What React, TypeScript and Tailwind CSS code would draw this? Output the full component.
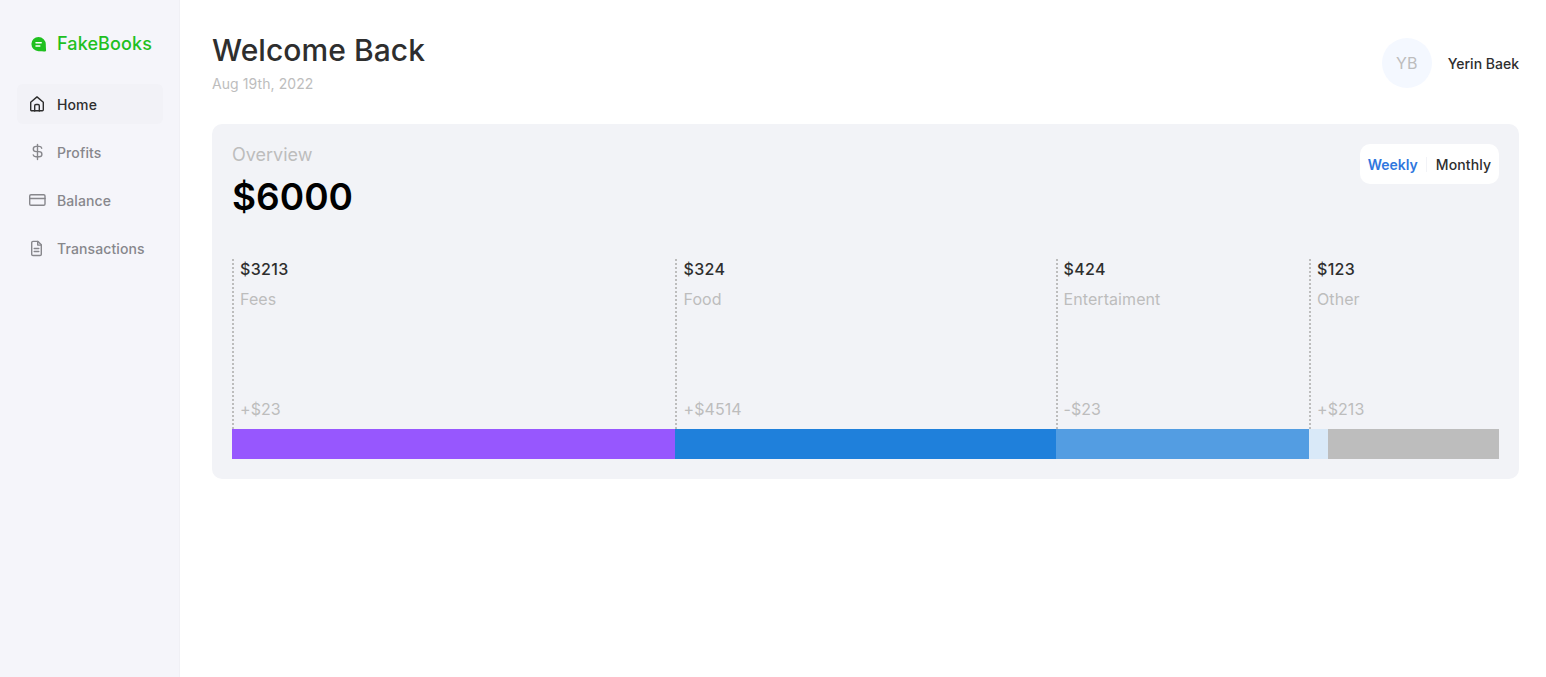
import type { ReactNode } from "react";

function Glyph({ children }: { children: ReactNode }) {
  return (
    <svg width="20" height="20" viewBox="0 0 20 20" fill="none" stroke="currentColor" strokeWidth="1.400" strokeLinecap="round" strokeLinejoin="round" className="shrink-0">
      {children}
    </svg>
  );
}

const nav = [
  {
    label: "Home",
    active: true,
    icon: (
      <Glyph>
        <path d="M2.700 8.300 9 2.900l6.300 5.400v7.400a1 1 0 0 1-1 1H3.700a1 1 0 0 1-1-1z" />
        <path d="M6.700 17v-5.300a1.200 1.200 0 0 1 1.200-1.200h2.200a1.200 1.200 0 0 1 1.200 1.200V17" />
      </Glyph>
    ),
  },
  {
    label: "Profits",
    active: false,
    icon: (
      <Glyph>
        <path d="M9.500 2.500v15" />
        <path d="M13.700 6.200c-.3-1.200-1.400-1.800-2.700-1.800H8.300c-1.700 0-3 1-3 2.600s1.300 2.600 3 2.600h2.600c1.700 0 3 1 3 2.600s-1.300 2.600-3 2.600H8c-1.400 0-2.500-.7-2.800-1.900" />
      </Glyph>
    ),
  },
  {
    label: "Balance",
    active: false,
    icon: (
      <Glyph>
        <rect x="1.700" y="4.700" width="15.300" height="10.600" rx="1.300" />
        <path d="M1.700 8.500H17" />
      </Glyph>
    ),
  },
  {
    label: "Transactions",
    active: false,
    icon: (
      <Glyph>
        <path d="M3.700 4.700a1.300 1.300 0 0 1 1.300-1.300h5l3.300 3.400v9.400a1.300 1.300 0 0 1-1.300 1.300H5a1.300 1.300 0 0 1-1.300-1.300z" />
        <path d="M9.700 3.500v3.600h3.500M6.200 10.500h4.600M6.200 13.500h4.600" />
      </Glyph>
    ),
  },
];

const stats = [
  { value: "$3213", label: "Fees", delta: "+$23", width: "w-[443px]", color: "bg-[#9757fe]", pad: "pl-[6px]" },
  { value: "$324", label: "Food", delta: "+$4514", width: "w-[381px]", color: "bg-[#1f80db]", pad: "pl-[6.500px]" },
  { value: "$424", label: "Entertaiment", delta: "-$23", width: "w-[253px]", color: "bg-[#539de2]", pad: "pl-[5.500px]" },
];

export default function App() {
  return (
    <div className="flex h-[677px] bg-white font-['Inter',sans-serif] text-[#2e2e2e]">
      <aside className="w-[180px] shrink-0 border-r border-[#f0f0f5] bg-[#f5f5fa] px-[17px] pt-[32px]">
        <div className="flex h-[24px] items-center gap-[10px] pl-[13px]">
          <svg width="17" height="17" viewBox="0 0 17 17" className="shrink-0 mt-[1px]">
            <path d="M8.500 1a7.300 7.300 0 0 1 7.300 7.300c0 2.300.2 4.800.3 6.300 0 .5-.4.800-.8.800-2 0-4.600-.2-6.800-.2a7.100 7.100 0 0 1 0-14.200z" fill="#1fc01f" />
            <path d="M6 6.700h5.200M6 10h3.800" stroke="#fff" strokeWidth="1.500" strokeLinecap="round" />
          </svg>
          <span className="text-[18px] font-medium leading-[24px] tracking-[0.006em] text-[#1fc01f]">FakeBooks</span>
        </div>
        <nav className="mt-[28px] flex flex-col gap-[8px]">
          {nav.map(({ label, icon, active }) => (
            <div
              key={label}
              className={`flex h-[40px] w-[146px] items-center gap-[9px] rounded-[6px] pl-[11px] text-[14px] font-medium tracking-[0.008em] ${
                active ? "bg-[#f2f2f7] text-[#2e2e2e]" : "text-[#87878c]"
              }`}
            >
              {icon}
              <span>{label}</span>
            </div>
          ))}
        </nav>
      </aside>

      <main className="min-w-0 flex-1 pl-[32px] pr-[27px]">
        <header className="flex h-[124px] items-start justify-between">
          <div className="pt-[31px]">
            <h1 className="text-[30px] font-medium leading-[38px] tracking-[0.002em] text-[#2e2e2e]">Welcome Back</h1>
            <p className="mt-[5px] text-[14px] leading-[20px] tracking-[0.006em] text-[#bdbdbd]">Aug 19th, 2022</p>
          </div>
          <div className="mt-[38px] flex items-center gap-[16px]">
            <div className="flex h-[50px] w-[50px] items-center justify-center rounded-full bg-[#f4f8ff] text-[16px] text-[#bdbdbd]">
              YB
            </div>
            <span className="text-[14px] font-medium text-[#2e2e2e]">Yerin Baek</span>
          </div>
        </header>

        <section className="h-[355px] rounded-[10px] bg-[#f2f3f7] p-[20px]">
          <div className="flex h-[115px] items-start justify-between">
            <div>
              <p className="text-[18px] leading-[22px] text-[#bdbdbd]">Overview</p>
              <p className="mt-[8px] text-[37px] font-semibold leading-[46px] text-black">$6000</p>
            </div>
            <div className="flex h-[40px] w-[139px] items-center justify-center rounded-[10px] bg-white text-[14px] font-medium">
              <span className="pr-[8px] font-semibold text-[#2f77de]">Weekly</span>
              <span className="h-[15px] w-px bg-[#f2f3f7]" />
              <span className="pl-[9px] tracking-[0.01em] text-[#2e2e2e]">Monthly</span>
            </div>
          </div>
          <div className="flex h-[170px]">
            {stats.map((s) => (
              <div key={s.label} className={`flex flex-col border-l-2 border-dotted border-[#bdbdbd] ${s.pad} ${s.width}`}>
                <p className="text-[16px] font-medium leading-[20px] tracking-[0.02em] text-[#2e2e2e]">{s.value}</p>
                <p className="mt-[10px] text-[16px] leading-[20px] tracking-[0.005em] text-[#bdbdbd]">{s.label}</p>
                <p className="mb-[10px] mt-auto text-[16px] leading-[20px] tracking-[0.005em] text-[#bdbdbd]">{s.delta}</p>
              </div>
            ))}
            <div className="flex flex-1 flex-col border-l-2 border-dotted border-[#bdbdbd] pl-[6px]">
              <p className="text-[16px] font-medium leading-[20px] tracking-[0.02em] text-[#2e2e2e]">$123</p>
              <p className="mt-[10px] text-[16px] leading-[20px] tracking-[0.005em] text-[#bdbdbd]">Other</p>
              <p className="mb-[10px] mt-auto text-[16px] leading-[20px] tracking-[0.005em] text-[#bdbdbd]">+$213</p>
            </div>
          </div>
          <div className="flex h-[30px]">
            {stats.map((s) => (
              <div key={s.label} className={`${s.width} ${s.color}`} />
            ))}
            <div className="w-[19px] bg-[#d9e9f8]" />
            <div className="flex-1 bg-[#bdbdbd]" />
          </div>
        </section>
      </main>
    </div>
  );
}
